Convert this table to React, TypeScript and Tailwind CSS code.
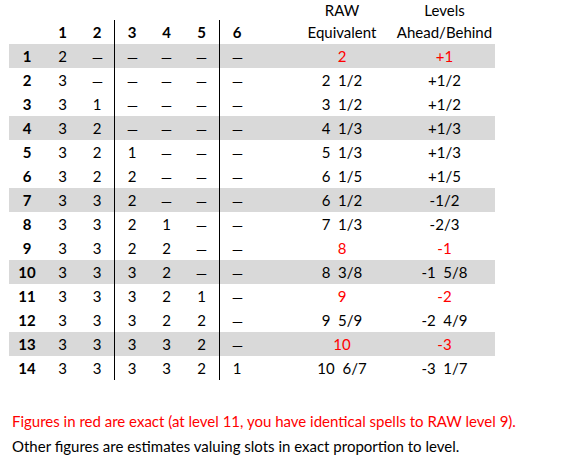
const rows: [string, string[], string, string, boolean][] = [
  ['1', ['2', '–', '–', '–', '–', '–'], '2', '+1', true],
  ['2', ['3', '–', '–', '–', '–', '–'], '2  1/2', '+1/2', false],
  ['3', ['3', '1', '–', '–', '–', '–'], '3  1/2', '+1/2', false],
  ['4', ['3', '2', '–', '–', '–', '–'], '4  1/3', '+1/3', false],
  ['5', ['3', '2', '1', '–', '–', '–'], '5  1/3', '+1/3', false],
  ['6', ['3', '2', '2', '–', '–', '–'], '6  1/5', '+1/5', false],
  ['7', ['3', '3', '2', '–', '–', '–'], '6  1/2', '-1/2', false],
  ['8', ['3', '3', '2', '1', '–', '–'], '7  1/3', '-2/3', false],
  ['9', ['3', '3', '2', '2', '–', '–'], '8', '-1', true],
  ['10', ['3', '3', '3', '2', '–', '–'], '8  3/8', '-1  5/8', false],
  ['11', ['3', '3', '3', '2', '1', '–'], '9', '-2', true],
  ['12', ['3', '3', '3', '2', '2', '–'], '9  5/9', '-2  4/9', false],
  ['13', ['3', '3', '3', '3', '2', '–'], '10', '-3', true],
  ['14', ['3', '3', '3', '3', '2', '1'], '10  6/7', '-3  1/7', false],
];

const slotW = ['w-[35px]', 'w-[34px]', 'w-[35px] border-l border-black', 'w-[35px]', 'w-[35px]', 'w-[35px] border-l border-black'];

export default function App() {
  return (
    <div className="w-[576px] h-[459px] bg-white text-black text-[15px] font-['Lato','Open_Sans',sans-serif] leading-none">
      <div className="flex h-[20px] pl-[9px] items-center">
        <div className="w-[281px]" />
        <div className="w-[104px] text-center">RAW</div>
        <div className="w-[101px] text-center">Levels</div>
      </div>
      <div className="flex h-[24px] pl-[9px] items-stretch">
        <div className="w-[36px]" />
        {['1', '2', '3', '4', '5', '6'].map((n, i) => (
          <div key={n} className={`${slotW[i]} flex items-center justify-center font-bold`}>{n}</div>
        ))}
        <div className="w-[36px]" />
        <div className="w-[104px] flex items-center justify-center">Equivalent</div>
        <div className="w-[101px] flex items-center justify-center">Ahead/Behind</div>
      </div>
      <div className="pl-[9px]">
        {rows.map(([lvl, slots, raw, diff, exact], r) => (
          <div key={lvl} className={`flex h-[24px] w-[486px] ${r % 3 === 0 ? 'bg-[#d9d9d9]' : ''}`}>
            <div className="w-[36px] flex items-center justify-center font-bold">{lvl}</div>
            {slots.map((s, i) => (
              <div key={i} className={`${slotW[i]} flex items-center justify-center`}>
                {s === '–' ? <span className="inline-block scale-x-[1.6] translate-y-[1px]">–</span> : s}
              </div>
            ))}
            <div className="w-[36px]" />
            <div className={`w-[104px] flex items-center justify-center whitespace-pre ${exact ? 'text-[#ff0000]' : ''}`}>{raw}</div>
            <div className={`w-[101px] flex items-center justify-center whitespace-pre ${exact ? 'text-[#ff0000]' : ''}`}>{diff}</div>
          </div>
        ))}
      </div>
      <div className="pl-[12px] pt-[29px] leading-[25px]">
        <p className="text-[#ff0000]">Figures in red are exact (at level 11, you have identical spells to RAW level 9).</p>
        <p>Other figures are estimates valuing slots in exact proportion to level.</p>
      </div>
    </div>
  );
}
